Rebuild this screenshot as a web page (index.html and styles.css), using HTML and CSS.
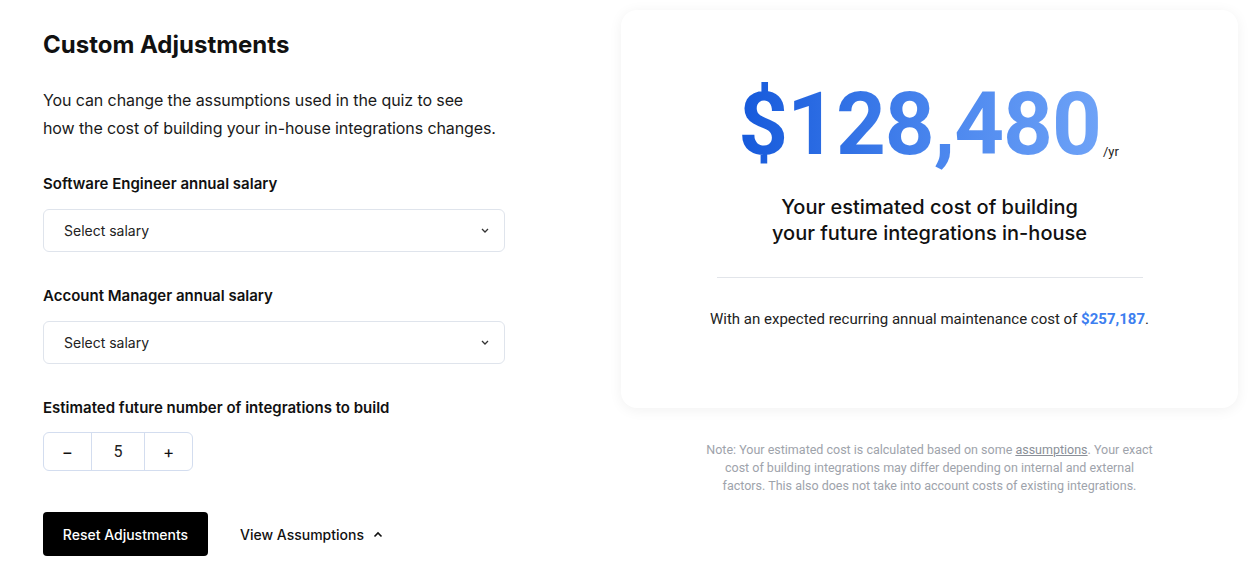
FILE: index.html
```html
<!DOCTYPE html>
<html lang="en">
<head>
<meta charset="utf-8">
<title>Custom Adjustments</title>
<link rel="stylesheet" href="styles.css">
</head>
<body>
<main class="page">
  <section class="adjust">
    <h2 class="adjust-title">Custom Adjustments</h2>
    <p class="adjust-intro">You can change the assumptions used in the quiz to see<br>how the cost of building your in-house integrations changes.</p>

    <div class="field field-first">
      <label class="field-label">Software Engineer annual salary</label>
      <div class="select">
        <span>Select salary</span>
        <svg class="chev" width="8" height="5" viewBox="0 0 8 5"><path d="M1 1l3 3 3-3" fill="none" stroke="#333" stroke-width="1.3"/></svg>
      </div>
    </div>

    <div class="field">
      <label class="field-label">Account Manager annual salary</label>
      <div class="select">
        <span>Select salary</span>
        <svg class="chev" width="8" height="5" viewBox="0 0 8 5"><path d="M1 1l3 3 3-3" fill="none" stroke="#333" stroke-width="1.3"/></svg>
      </div>
    </div>

    <div class="field">
      <label class="field-label">Estimated future number of integrations to build</label>
      <div class="stepper">
        <button class="step-btn">&minus;</button>
        <span class="step-val">5</span>
        <button class="step-btn">+</button>
      </div>
    </div>

    <div class="actions">
      <button class="reset">Reset Adjustments</button>
      <button class="view">View Assumptions
        <svg width="10" height="7" viewBox="0 0 10 7"><path d="M1.5 5.5L5 2l3.5 3.5" fill="none" stroke="#111" stroke-width="1.6"/></svg>
      </button>
    </div>
  </section>

  <section class="result">
    <div class="card">
      <div class="amount-row">
        <span class="amount">$128,480</span><span class="per">/yr</span>
      </div>
      <h3 class="card-sub">Your estimated cost of building<br>your future integrations in-house</h3>
      <hr class="divider">
      <p class="maint">With an expected recurring annual maintenance cost of <strong>$257,187</strong>.</p>
    </div>
    <p class="note">Note: Your estimated cost is calculated based on some <a href="#">assumptions</a>. Your exact cost of building integrations may differ depending on internal and external factors. This also does not take into account costs of existing integrations.</p>
  </section>
</main>
</body>
</html>
```

FILE: styles.css
```css
* { box-sizing: border-box; }
html, body { margin: 0; background: #fff; }
body {
  font-family: Inter, "Noto Sans", sans-serif;
  color: #111;
}
.page {
  display: flex;
  padding: 10px 0 0 43px;
  gap: 116px;
}
.adjust {
  width: 462px;
  padding-top: 19px;
}
.adjust-title {
  margin: 0;
  font-size: 24px;
  line-height: 32px;
  font-weight: 700;
}
.adjust-intro {
  margin: 25px 0 0;
  font-size: 16px;
  line-height: 28px;
  color: #1a1a1a;
  letter-spacing: -0.1px;
}
.field { margin-top: 33px; }
.field-first { margin-top: 31px; }
.field-label {
  display: block;
  font-size: 15px;
  line-height: 22px;
  font-weight: 600;
}
.select {
  margin-top: 14px;
  height: 43px;
  border: 1px solid #dfe4ec;
  border-radius: 6px;
  display: flex;
  align-items: center;
  justify-content: space-between;
  padding: 0 15px 0 20px;
  font-size: 14px;
  color: #222;
}
.field-first .select { margin-top: 14px; }
.chev { display: block; }
.stepper {
  margin-top: 13px;
  display: flex;
  width: 150px;
  height: 39px;
  border: 1px solid #d3ddef;
  border-radius: 6px;
}
.step-btn {
  border: 0;
  background: none;
  width: 47px;
  font-family: Inter, sans-serif;
  font-size: 17px;
  color: #111;
  padding: 0;
}
.step-val {
  width: 55px;
  border-left: 1px solid #d3ddef;
  border-right: 1px solid #d3ddef;
  display: flex;
  align-items: center;
  justify-content: center;
  font-family: Roboto, sans-serif;
  font-size: 16px;
  color: #222;
}
.actions {
  margin-top: 41px;
  display: flex;
  align-items: center;
  gap: 32px;
}
.reset {
  height: 44px;
  width: 165px;
  border: 0;
  border-radius: 4px;
  background: #000;
  color: #fff;
  font-family: Inter, sans-serif;
  font-size: 14px;
  font-weight: 500;
}
.view {
  border: 0;
  background: none;
  padding: 0;
  display: flex;
  align-items: center;
  gap: 9px;
  font-family: Inter, sans-serif;
  font-size: 14px;
  font-weight: 500;
  color: #111;
}
.result { width: 617px; }
.card {
  border-radius: 16px;
  background: #fff;
  box-shadow: 0 2px 14px rgba(0,0,0,0.06);
  height: 398px;
  display: flex;
  flex-direction: column;
  align-items: center;
  padding-top: 64px;
}
.amount-row {
  display: flex;
  align-items: flex-end;
  margin-left: -2px;
}
.amount {
  font-family: Roboto, sans-serif;
  font-weight: 700;
  font-size: 87px;
  line-height: 100px;
  letter-spacing: -1px;
  background: linear-gradient(90deg, #1559db 0%, #4a86ee 55%, #6fa3f7 100%);
  -webkit-background-clip: text;
  background-clip: text;
  color: transparent;
}
.per {
  font-family: Roboto, sans-serif;
  font-size: 13px;
  color: #222;
  margin: 0 0 15px 2px;
}
.card-sub {
  margin: 20px 0 0;
  text-align: center;
  font-size: 20px;
  line-height: 26px;
  font-weight: 500;
  color: #111;
}
.divider {
  margin: 31px 0 0;
  width: 426px;
  border: 0;
  border-top: 1px solid #e2e5ea;
}
.maint {
  margin: 32px 0 0;
  font-family: Roboto, sans-serif;
  font-size: 15px;
  color: #222;
}
.maint strong { color: #3d7ff0; font-weight: 700; }
.note {
  margin: 33px auto 0;
  width: 450px;
  text-align: center;
  font-family: Roboto, sans-serif;
  font-size: 12.5px;
  line-height: 18px;
  color: #9ea3ab;
}
.note a { color: #8a8f98; }
```
